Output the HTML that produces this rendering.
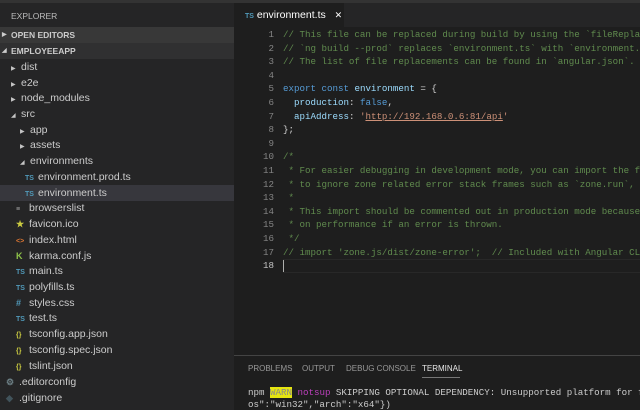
<!DOCTYPE html><html><head><style>
*{margin:0;padding:0;box-sizing:border-box}
html,body{width:640px;height:410px;overflow:hidden}
body{background:#1e1e1e;font-family:"Liberation Sans",sans-serif;position:relative}
#top{position:absolute;left:0;top:0;width:640px;height:3px;background:#333}
#side{position:absolute;left:0;top:3px;width:234px;height:407px;background:#252526;color:#ccc;font-size:10.5px;overflow:hidden}
.t{position:absolute;left:11px;top:8px;font-size:8.5px;color:#bbb}
.h{position:absolute;left:0;width:234px;height:16px;font-size:8.5px;font-weight:bold;color:#ccc;line-height:16px;padding-left:11px}
.r{position:absolute;left:0;width:234px;height:16px;line-height:16px;white-space:nowrap}
.r i{font-style:normal;display:inline-block;width:10px;font-size:6px;color:#c5c5c5}
.ic{display:inline-block;width:13px;font-size:7px;font-weight:bold}
#ed{position:absolute;left:234px;top:3px;width:406px;height:352px;background:#1e1e1e;overflow:hidden}
#tabs{position:absolute;left:0;top:0;width:406px;height:24px;background:#252526}
#tab{position:absolute;left:0;top:0;width:110px;height:24px;background:#1e1e1e;color:#fff;font-size:10.5px;line-height:24px;padding-left:11px}
.code{position:absolute;left:0;top:25px;width:406px;height:330px;font-family:"Liberation Mono",monospace;font-size:9.17px;line-height:13.6px;white-space:pre;color:#d4d4d4}
.ln{position:absolute;left:0;width:40px;text-align:right;color:#858585}
.cl{position:absolute;left:49px}
.c{color:#608b4e}.k{color:#569cd6}.v{color:#9cdcfe}.s{color:#ce9178}
#panel{position:absolute;left:234px;top:355px;width:406px;height:55px;background:#1e1e1e;border-top:1px solid #444;overflow:hidden}
.pt{position:absolute;top:8px;font-size:8px;color:#999}
.term{position:absolute;left:14px;font-family:"Liberation Mono",monospace;font-size:9.17px;color:#ccc;white-space:pre}
</style></head><body>
<div id="top"></div>
<div id="side">
<div class="t">EXPLORER</div>
<div class="h" style="top:24px;background:#383838"><span style="position:absolute;left:2px;font-size:6px">▶</span>OPEN EDITORS</div>
<div class="h" style="top:40px;background:#303031"><span style="position:absolute;left:2px;font-size:6px">◢</span>EMPLOYEEAPP</div>
<div class="r" style="top:56px;padding-left:11px"><i>▶</i>dist</div>
<div class="r" style="top:72px;padding-left:11px"><i>▶</i>e2e</div>
<div class="r" style="top:87px;padding-left:11px"><i>▶</i>node_modules</div>
<div class="r" style="top:103px;padding-left:11px"><i>◢</i>src</div>
<div class="r" style="top:119px;padding-left:20px"><i>▶</i>app</div>
<div class="r" style="top:134px;padding-left:20px"><i>▶</i>assets</div>
<div class="r" style="top:150px;padding-left:20px"><i>◢</i>environments</div>
<div class="r" style="top:166px;padding-left:25px"><span class="ic" style="color:#519aba">TS</span>environment.prod.ts</div>
<div class="r" style="top:182px;padding-left:25px;background:#37373d"><span class="ic" style="color:#519aba">TS</span>environment.ts</div>
<div class="r" style="top:197px;padding-left:16px"><span class="ic" style="color:#aaa">≡</span>browserslist</div>
<div class="r" style="top:213px;padding-left:16px"><span class="ic" style="color:#cbcb41;font-size:9px">★</span>favicon.ico</div>
<div class="r" style="top:229px;padding-left:16px"><span class="ic" style="color:#e37933">&lt;&gt;</span>index.html</div>
<div class="r" style="top:245px;padding-left:16px"><span class="ic" style="color:#8dc149;font-size:9px">K</span>karma.conf.js</div>
<div class="r" style="top:260px;padding-left:16px"><span class="ic" style="color:#519aba">TS</span>main.ts</div>
<div class="r" style="top:276px;padding-left:16px"><span class="ic" style="color:#519aba">TS</span>polyfills.ts</div>
<div class="r" style="top:292px;padding-left:16px"><span class="ic" style="color:#519aba;font-size:9px">#</span>styles.css</div>
<div class="r" style="top:307px;padding-left:16px"><span class="ic" style="color:#519aba">TS</span>test.ts</div>
<div class="r" style="top:323px;padding-left:16px"><span class="ic" style="color:#cbcb41">{}</span>tsconfig.app.json</div>
<div class="r" style="top:339px;padding-left:16px"><span class="ic" style="color:#cbcb41">{}</span>tsconfig.spec.json</div>
<div class="r" style="top:355px;padding-left:16px"><span class="ic" style="color:#cbcb41">{}</span>tslint.json</div>
<div class="r" style="top:371px;padding-left:6px"><span class="ic" style="color:#6d8086;font-size:9px">⚙</span>.editorconfig</div>
<div class="r" style="top:387px;padding-left:6px"><span class="ic" style="color:#41535b;font-size:9px">◆</span>.gitignore</div>
</div>
<div id="ed">
<div id="tabs"><div id="tab"><span style="color:#519aba;font-size:7px;font-weight:bold">TS</span> environment.ts <span style="margin-left:6px;font-size:9px">✕</span></div></div>
<div class="code">
<div class="ln" style="top:0">1</div><div class="cl c" style="top:0">// This file can be replaced during build by using the `fileRepla</div>
<div class="ln" style="top:13.6px">2</div><div class="cl c" style="top:13.6px">// `ng build --prod` replaces `environment.ts` with `environment.</div>
<div class="ln" style="top:27.2px">3</div><div class="cl c" style="top:27.2px">// The list of file replacements can be found in `angular.json`.</div>
<div class="ln" style="top:40.8px">4</div>
<div class="ln" style="top:54.4px">5</div><div class="cl" style="top:54.4px"><span class="k">export</span> <span class="k">const</span> <span class="v">environment</span> = {</div>
<div class="ln" style="top:68px">6</div><div class="cl" style="top:68px">  <span class="v">production</span>: <span class="k">false</span>,</div>
<div class="ln" style="top:81.6px">7</div><div class="cl" style="top:81.6px">  <span class="v">apiAddress</span>: <span class="s">'<u>http://192.168.0.6:81/api</u>'</span></div>
<div class="ln" style="top:95.2px">8</div><div class="cl" style="top:95.2px">};</div>
<div class="ln" style="top:108.8px">9</div>
<div class="ln" style="top:122.4px">10</div><div class="cl c" style="top:122.4px">/*</div>
<div class="ln" style="top:136px">11</div><div class="cl c" style="top:136px"> * For easier debugging in development mode, you can import the f</div>
<div class="ln" style="top:149.6px">12</div><div class="cl c" style="top:149.6px"> * to ignore zone related error stack frames such as `zone.run`,</div>
<div class="ln" style="top:163.2px">13</div><div class="cl c" style="top:163.2px"> *</div>
<div class="ln" style="top:176.8px">14</div><div class="cl c" style="top:176.8px"> * This import should be commented out in production mode because</div>
<div class="ln" style="top:190.4px">15</div><div class="cl c" style="top:190.4px"> * on performance if an error is thrown.</div>
<div class="ln" style="top:204px">16</div><div class="cl c" style="top:204px"> */</div>
<div class="ln" style="top:217.6px">17</div><div class="cl c" style="top:217.6px">// import 'zone.js/dist/zone-error';  // Included with Angular CL</div>
<div class="ln" style="top:231.2px;color:#c6c6c6">18</div><div class="cl" style="top:231.2px;width:357px;height:13.6px;border-top:1px solid #282828;border-bottom:1px solid #282828"><span style="display:inline-block;width:1px;height:12px;background:#aeafad"></span></div>
</div>
</div>
<div id="panel">
<div class="pt" style="left:14px">PROBLEMS</div>
<div class="pt" style="left:68px">OUTPUT</div>
<div class="pt" style="left:112px">DEBUG CONSOLE</div>
<div class="pt" style="left:188px;color:#e7e7e7">TERMINAL</div>
<div style="position:absolute;left:188px;top:21px;width:38px;height:1px;background:#777"></div>
<div class="term" style="top:31px">npm <span style="background:#e5e510;color:#888">WARN</span> <span style="color:#bc3fbc">notsup</span> SKIPPING OPTIONAL DEPENDENCY: Unsupported platform for fsevent</div>
<div class="term" style="top:43px">os":"win32","arch":"x64"})</div>
</div>
</body></html>
